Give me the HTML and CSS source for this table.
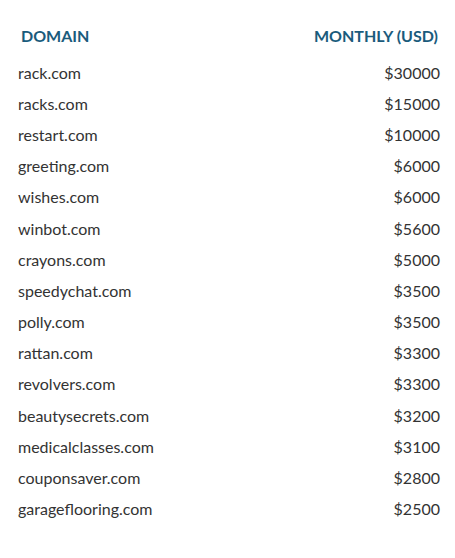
FILE: index.html
```html
<!DOCTYPE html>
<html>
<head>
<meta charset="utf-8">
<link rel="stylesheet" href="styles.css">
</head>
<body>
<div class="wrap">
<table class="prices">
<thead>
<tr><th class="dom">DOMAIN</th><th class="amt">MONTHLY (USD)</th></tr>
</thead>
<tbody>
<tr><td>rack.com</td><td class="amt">$30000</td></tr>
<tr><td>racks.com</td><td class="amt">$15000</td></tr>
<tr><td>restart.com</td><td class="amt">$10000</td></tr>
<tr><td>greeting.com</td><td class="amt">$6000</td></tr>
<tr><td>wishes.com</td><td class="amt">$6000</td></tr>
<tr><td>winbot.com</td><td class="amt">$5600</td></tr>
<tr><td>crayons.com</td><td class="amt">$5000</td></tr>
<tr><td>speedychat.com</td><td class="amt">$3500</td></tr>
<tr><td>polly.com</td><td class="amt">$3500</td></tr>
<tr><td>rattan.com</td><td class="amt">$3300</td></tr>
<tr><td>revolvers.com</td><td class="amt">$3300</td></tr>
<tr><td>beautysecrets.com</td><td class="amt">$3200</td></tr>
<tr><td>medicalclasses.com</td><td class="amt">$3100</td></tr>
<tr><td>couponsaver.com</td><td class="amt">$2800</td></tr>
<tr><td>garageflooring.com</td><td class="amt">$2500</td></tr>
</tbody>
</table>
</div>
</body>
</html>
```
FILE: styles.css
```css
html, body { margin: 0; padding: 0; background: #fff; }
body { font-family: Lato, "Noto Sans", sans-serif; color: #333; }
.wrap { padding: 24px 15px 0 18px; }
.prices { width: 100%; border-collapse: collapse; font-size: 16px; }
.prices th { font-weight: bold; color: #1a5b7c; text-align: left; padding: 0 0 9px 3px; line-height: 24px; }
.prices th.amt { text-align: right; padding: 0 2px 9px 0; }
.prices td { padding: 0; height: 31.2px; line-height: 20px; }
.prices td.amt { text-align: right; }
```
